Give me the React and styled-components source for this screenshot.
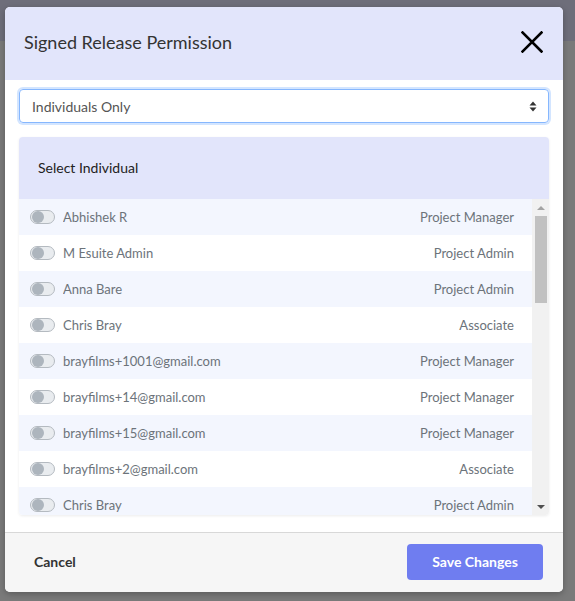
// Packages
import styled, { createGlobalStyle } from "styled-components"

// Data
const people = [
  { name: "Abhishek R", role: "Project Manager" },
  { name: "M Esuite Admin", role: "Project Admin" },
  { name: "Anna Bare", role: "Project Admin" },
  { name: "Chris Bray", role: "Associate" },
  { name: "brayfilms+1001@gmail.com", role: "Project Manager" },
  { name: "brayfilms+14@gmail.com", role: "Project Manager" },
  { name: "brayfilms+15@gmail.com", role: "Project Manager" },
  { name: "brayfilms+2@gmail.com", role: "Associate" },
  { name: "Chris Bray", role: "Project Admin" },
]

// Styled Components
const GlobalStyle = createGlobalStyle`
  html, body {
    margin: 0;
    padding: 0;
  }
  body {
    font-family: Lato, "Noto Sans", sans-serif;
  }
  * {
    box-sizing: border-box;
  }
`

const Backdrop = styled.div`
  width: 575px;
  height: 601px;
  overflow: hidden;
  display: flex;
  padding: 7px 12px 9px 5px;
  background: linear-gradient(to bottom, #6e6e7a 0, #6e6e7a 41px, #7a7a7a 41px);
`

const Modal = styled.div`
  width: 558px;
  height: 585px;
  display: flex;
  flex-direction: column;
  background: #fff;
  border-radius: 5px;
  overflow: hidden;
  box-shadow: 0 2px 6px rgba(0, 0, 0, 0.25);
`

const Header = styled.div`
  height: 73px;
  flex-shrink: 0;
  display: flex;
  align-items: center;
  justify-content: space-between;
  padding: 0 18px 4px 19px;
  background: #e2e5fb;
`

const Title = styled.h2`
  margin: 0;
  font-size: 18px;
  font-weight: 400;
  color: #333;
`

const CloseBtn = styled.button`
  width: 26px;
  height: 26px;
  padding: 0;
  border: 0;
  background: none;
  display: flex;
  align-items: center;
  justify-content: center;
  cursor: pointer;
`

const Body = styled.div`
  flex: 1;
  min-height: 0;
  display: flex;
  flex-direction: column;
  gap: 14px;
  padding: 9px 14px 17px 14px;
`

const SelectBox = styled.div`
  height: 34px;
  flex-shrink: 0;
  display: flex;
  align-items: center;
  justify-content: space-between;
  padding: 0 11px 0 12px;
  border: 1px solid #86b7fe;
  border-radius: 4px;
  box-shadow: 0 0 0 2px rgba(13, 110, 253, 0.18);
  font-size: 14px;
  color: #555;
`

const Card = styled.div`
  flex: 1;
  min-height: 0;
  display: flex;
  flex-direction: column;
  border-radius: 4px;
  overflow: hidden;
  box-shadow: 0 1px 3px rgba(0, 0, 0, 0.08);
`

const CardHeader = styled.div`
  height: 62px;
  flex-shrink: 0;
  display: flex;
  align-items: center;
  padding: 0 19px 2px;
  background: #e2e5fb;
  font-size: 14px;
  color: #222;
`

const ListArea = styled.div`
  flex: 1;
  min-height: 0;
  display: flex;
`

const Rows = styled.div`
  flex: 1;
  min-width: 0;
  overflow: hidden;
  background: #fff;
`

const ScrollTrack = styled.div`
  width: 17px;
  flex-shrink: 0;
  display: flex;
  flex-direction: column;
  align-items: center;
  background: #f1f1f1;
`

const ScrollArrow = styled.div`
  height: 17px;
  width: 100%;
  flex-shrink: 0;
  display: flex;
  align-items: center;
  justify-content: center;
  margin-top: ${({ $down }) => ($down ? "auto" : "0")};
`

const Thumb = styled.div`
  width: 12px;
  height: 87px;
  flex-shrink: 0;
  background: #c1c1c1;
`

const Row = styled.div`
  height: 36px;
  flex-shrink: 0;
  display: flex;
  align-items: center;
  gap: 8px;
  padding: 0 18px 0 11px;
  background: ${({ $alt }) => ($alt ? "#f3f6fe" : "#fff")};
  font-size: 13px;
  color: #6c737a;
`

const Toggle = styled.span`
  position: relative;
  width: 25px;
  height: 14px;
  flex-shrink: 0;
  border: 1px solid #b4bac0;
  border-radius: 8px;
  background: #e9ecef;

  &::after {
    content: "";
    position: absolute;
    left: 1px;
    top: 0;
    width: 12px;
    height: 12px;
    border-radius: 50%;
    background: #adb5bd;
  }
`

const Name = styled.span`
  flex: 1;
  white-space: nowrap;
  overflow: hidden;
  text-overflow: ellipsis;
`

const Role = styled.span`
  white-space: nowrap;
`

const Footer = styled.div`
  height: 60px;
  flex-shrink: 0;
  display: flex;
  align-items: center;
  justify-content: space-between;
  padding: 0 20px 2px 29px;
  border-top: 1px solid #d8d8d8;
  background: #f6f6f6;
`

const TextBtn = styled.button`
  border: 0;
  background: none;
  padding: 0;
  font-family: inherit;
  font-size: 14px;
  font-weight: 700;
  color: #333;
  cursor: pointer;
`

const PrimaryBtn = styled.button`
  width: 136px;
  height: 36px;
  border: 0;
  border-radius: 4px;
  background: #6f7df0;
  color: #fff;
  font-family: inherit;
  font-size: 14px;
  font-weight: 700;
  cursor: pointer;
`

// Icons
const CloseIcon = () => (
  <svg width="22" height="22" viewBox="0 0 22 22">
    <path d="M1.5 1.5 L20.5 20.5 M20.5 1.5 L1.5 20.5" stroke="#000" strokeWidth="2.6" strokeLinecap="square" />
  </svg>
)

const UpDownIcon = () => (
  <svg width="8" height="11" viewBox="0 0 8 11">
    <path d="M4 0.5 L7.5 4.5 L0.5 4.5 Z M0.5 6.5 L7.5 6.5 L4 10.5 Z" fill="#333" />
  </svg>
)

const Triangle = ({ down, color }) => (
  <svg width="8" height="4" viewBox="0 0 8 4">
    <path d={down ? "M0 0 L8 0 L4 4 Z" : "M4 0 L8 4 L0 4 Z"} fill={color} />
  </svg>
)

const App = () => (
  <>
    <GlobalStyle />
    <Backdrop>
      <Modal>
        <Header>
          <Title>Signed Release Permission</Title>
          <CloseBtn aria-label="Close">
            <CloseIcon />
          </CloseBtn>
        </Header>
        <Body>
          <SelectBox>
            <span>Individuals Only</span>
            <UpDownIcon />
          </SelectBox>
          <Card>
            <CardHeader>Select Individual</CardHeader>
            <ListArea>
              <Rows>
                {people.map((p, i) => (
                  <Row key={i} $alt={i % 2 === 0}>
                    <Toggle />
                    <Name>{p.name}</Name>
                    <Role>{p.role}</Role>
                  </Row>
                ))}
              </Rows>
              <ScrollTrack>
                <ScrollArrow>
                  <Triangle color="#a3a3a3" />
                </ScrollArrow>
                <Thumb />
                <ScrollArrow $down>
                  <Triangle down color="#505050" />
                </ScrollArrow>
              </ScrollTrack>
            </ListArea>
          </Card>
        </Body>
        <Footer>
          <TextBtn>Cancel</TextBtn>
          <PrimaryBtn>Save Changes</PrimaryBtn>
        </Footer>
      </Modal>
    </Backdrop>
  </>
)

export default App
